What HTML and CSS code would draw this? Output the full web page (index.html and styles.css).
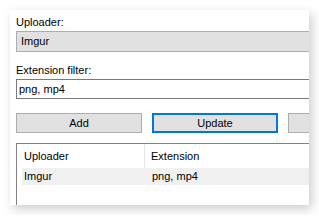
FILE: index.html
```html
<!DOCTYPE html>
<html lang="en">

<head>
    <meta charset="UTF-8">
    <meta name="viewport" content="width=device-width, initial-scale=1.0">
    <title>Uploader filters</title>
    <link rel="stylesheet" href="styles.css">
</head>

<body>
    <div class="window">
        <div class="form">
            <label class="field-label">Uploader:</label>
            <div class="combo">Imgur</div>
            <label class="field-label">Extension filter:</label>
            <div class="textbox">png, mp4</div>
            <div class="buttons">
                <button class="btn">Add</button>
                <button class="btn focused">Update</button>
                <button class="btn" aria-label="Remove"></button>
            </div>
            <div class="list">
                <div class="list-header">
                    <div class="col col-uploader">Uploader</div>
                    <div class="col col-ext">Extension</div>
                </div>
                <div class="list-row">
                    <div class="col col-uploader">Imgur</div>
                    <div class="col col-ext">png, mp4</div>
                </div>
            </div>
        </div>
    </div>
</body>

</html>
```

FILE: styles.css
```css
* {
    margin: 0;
    padding: 0;
    box-sizing: border-box
}

body {
    background: #fff;
    color: #000;
    font-family: "Liberation Sans", Arial, sans-serif;
    font-size: 11px;
    padding: 10px
}

.window {
    width: 299px;
    height: 195px;
    background: #fff;
    box-shadow: 3px 4px 10px rgba(0, 0, 0, 0.2);
    overflow: hidden
}

.form {
    width: 420px;
    padding: 4px 0 0 6px;
    display: flex;
    flex-direction: column
}

.field-label {
    display: block;
    height: 17px;
    line-height: 17px
}

.combo {
    height: 21px;
    margin-bottom: 10px;
    padding-left: 4px;
    line-height: 19px;
    background: #e1e1e1;
    border: 1px solid #adadad
}

.textbox {
    height: 20px;
    padding-left: 2px;
    line-height: 18px;
    border: 1px solid #7a7a7a;
    background: #fff
}

.buttons {
    display: flex;
    gap: 10px;
    margin-top: 14px
}

.btn {
    width: 126px;
    height: 20px;
    flex: none;
    font: inherit;
    color: #000;
    background: #e1e1e1;
    border: 1px solid #adadad
}

.btn.focused {
    border: 2px solid #0078d7
}

.list {
    margin-top: 10px;
    height: 80px;
    border-left: 1px solid #828282;
    border-top: 1px solid #828282;
    padding-left: 5px
}

.list-header,
.list-row {
    display: flex;
    height: 24px;
    line-height: 24px
}

.list-row {
    height: 17px;
    line-height: 17px;
    background: #f0f0f0
}

.col {
    padding-left: 2px
}

.col-uploader {
    width: 123px
}

.list-header .col-uploader {
    border-right: 1px solid #e5e5e5
}

.list-header .col-ext {
    padding-left: 6px
}

.list-row .col-ext {
    padding-left: 7px
}
```
